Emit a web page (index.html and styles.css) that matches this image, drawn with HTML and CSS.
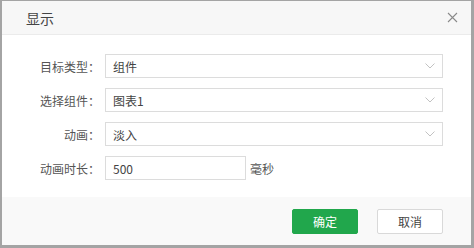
FILE: index.html
```html
<!DOCTYPE html>
<html lang="zh">
<head>
<meta charset="utf-8">
<link rel="stylesheet" href="styles.css">
</head>
<body>
<div class="dialog">
  <div class="header">
    <span class="title">显示</span>
    <svg class="close" width="11" height="11" viewBox="0 0 11 11"><path d="M1 1L10 10M10 1L1 10" stroke="#8a8a8a" stroke-width="1.1" fill="none"/></svg>
  </div>
  <div class="body">
    <div class="row">
      <label class="label">目标类型：</label>
      <div class="select"><span>组件</span><svg class="chev" width="10" height="6" viewBox="0 0 10 6"><path d="M0.5 0.5L5 5L9.5 0.5" stroke="#c2c2c2" stroke-width="1" fill="none"/></svg></div>
    </div>
    <div class="row">
      <label class="label">选择组件：</label>
      <div class="select"><span>图表1</span><svg class="chev" width="10" height="6" viewBox="0 0 10 6"><path d="M0.5 0.5L5 5L9.5 0.5" stroke="#c2c2c2" stroke-width="1" fill="none"/></svg></div>
    </div>
    <div class="row">
      <label class="label">动画：</label>
      <div class="select"><span>淡入</span><svg class="chev" width="10" height="6" viewBox="0 0 10 6"><path d="M0.5 0.5L5 5L9.5 0.5" stroke="#c2c2c2" stroke-width="1" fill="none"/></svg></div>
    </div>
    <div class="row">
      <label class="label">动画时长：</label>
      <div class="input"><span>500</span></div>
      <span class="unit">毫秒</span>
    </div>
  </div>
  <div class="footer">
    <button class="btn btn-primary">确定</button>
    <button class="btn btn-default">取消</button>
  </div>
</div>
</body>
</html>
```
FILE: styles.css
```css
html, body {
  margin: 0;
  padding: 0;
}
body {
  background: #a4a4a4;
  width: 474px;
  height: 248px;
  padding: 1px 0 0 2px;
  box-sizing: border-box;
  font-family: "Noto Sans CJK SC", "Noto Sans", sans-serif;
  font-size: 12px;
  color: #444;
}
.dialog {
  width: 469px;
  height: 244px;
  background: #fff;
  display: flex;
  flex-direction: column;
}
.header {
  height: 33px;
  border-bottom: 1px solid #ebebeb;
  background: #f7f7f7;
  display: flex;
  align-items: center;
  justify-content: space-between;
  padding: 0 13px 0 24px;
}
.title {
  font-size: 14px;
  color: #444;
}
.close {
  display: block;
}
.body {
  flex: 1;
  padding-top: 19px;
  display: flex;
  flex-direction: column;
  gap: 10px;
}
.row {
  display: flex;
  align-items: center;
  height: 24px;
}
.label {
  width: 98px;
  text-align: right;
  margin-right: 5px;
  color: #555;
}
.select, .input {
  height: 24px;
  box-sizing: border-box;
  border: 1px solid #dcdcdc;
  display: flex;
  align-items: center;
  padding: 0 7px;
  color: #444;
}
.select {
  width: 338px;
  justify-content: space-between;
}
.input {
  width: 141px;
}
.chev {
  display: block;
}
.unit {
  margin-left: 4px;
  color: #555;
}
.footer {
  height: 48px;
  background: #f9f9f9;
  display: flex;
  align-items: center;
  justify-content: flex-end;
  gap: 19px;
  padding-right: 28px;
}
.btn {
  width: 66px;
  height: 25px;
  box-sizing: border-box;
  font-family: inherit;
  font-size: 12px;
  padding: 0;
  border-radius: 2px;
}
.btn-primary {
  background: #21a74c;
  border: 1px solid #21a74c;
  color: #fff;
}
.btn-default {
  background: #fff;
  border: 1px solid #d9d9d9;
  color: #444;
}
```
